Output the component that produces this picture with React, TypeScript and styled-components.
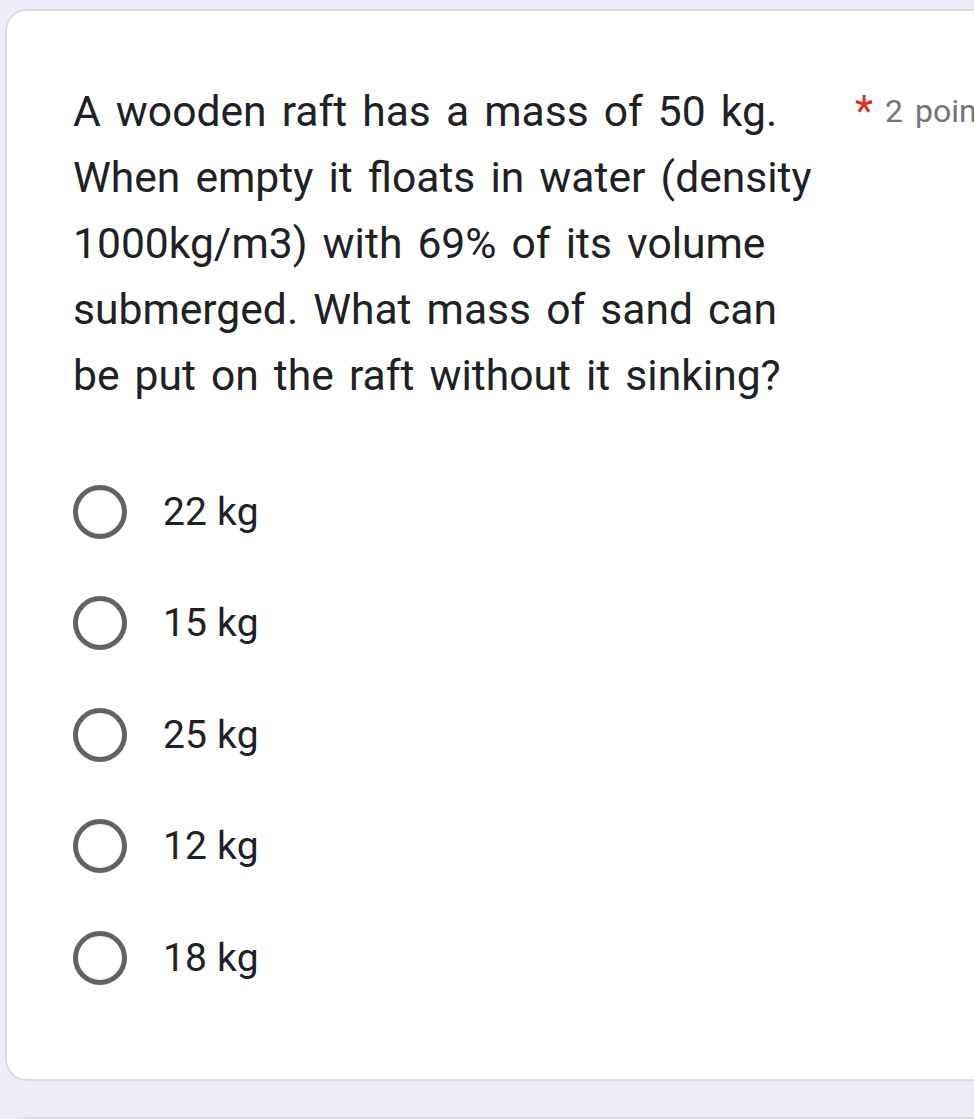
import React from "react";
import styled, { createGlobalStyle } from "styled-components";

const Global = createGlobalStyle`
  html, body {
    margin: 0;
    padding: 0;
    background: #f0ebf8;
    overflow: hidden;
  }
  body {
    font-family: Roboto, "Noto Sans", Arial, sans-serif;
    color: #202124;
  }
`;

const Page = styled.div`
  display: flex;
  flex-direction: column;
  gap: 36px;
  padding: 9px 0 0 5px;
  width: 1100px;
`;

const Card = styled.div<{ $minHeight?: number }>`
  box-sizing: border-box;
  width: 1064px;
  min-height: ${(p) => (p.$minHeight ? `${p.$minHeight}px` : "0")};
  background: #ffffff;
  border: 2px solid #dcdbe2;
  border-radius: 22px;
  padding: 67px 64px 65px 66px;
`;

const TitleRow = styled.div`
  display: flex;
  align-items: flex-start;
`;

const Question = styled.div`
  flex: 0 0 754px;
  font-size: 42.6px;
  line-height: 66px;
  font-weight: 400;
  word-spacing: 4.5px;
  color: #202124;
`;

const Required = styled.span`
  color: #d93025;
  font-size: 42px;
  line-height: 66px;
  margin-left: 28px;
  margin-right: 12px;
`;

const Points = styled.span`
  color: #70757a;
  font-size: 32px;
  line-height: 66px;
  word-spacing: 4px;
  white-space: nowrap;
`;

const Options = styled.div`
  display: flex;
  flex-direction: column;
  margin-top: 48px;
`;

const Option = styled.label`
  display: flex;
  align-items: center;
  gap: 36px;
  height: 111.5px;
`;

const Radio = styled.span`
  box-sizing: border-box;
  width: 54px;
  height: 54px;
  border: 5.5px solid #5f6368;
  border-radius: 50%;
  flex: 0 0 auto;
`;

const OptionText = styled.span`
  font-size: 39px;
  color: #202124;
  letter-spacing: 0.2px;
`;

const options = ["22 kg", "15 kg", "25 kg", "12 kg", "18 kg"];

export default function App() {
  return (
    <>
      <Global />
      <Page>
        <Card>
          <TitleRow>
            <Question>
              A wooden raft has a mass of 50 kg. When empty it floats in water
              (density 1000kg/m3) with 69% of its volume submerged. What mass of
              sand can be put on the raft without it sinking?
            </Question>
            <Required>*</Required>
            <Points>2 points</Points>
          </TitleRow>
          <Options>
            {options.map((o) => (
              <Option key={o}>
                <Radio />
                <OptionText>{o}</OptionText>
              </Option>
            ))}
          </Options>
        </Card>
        <Card $minHeight={200} />
      </Page>
    </>
  );
}
